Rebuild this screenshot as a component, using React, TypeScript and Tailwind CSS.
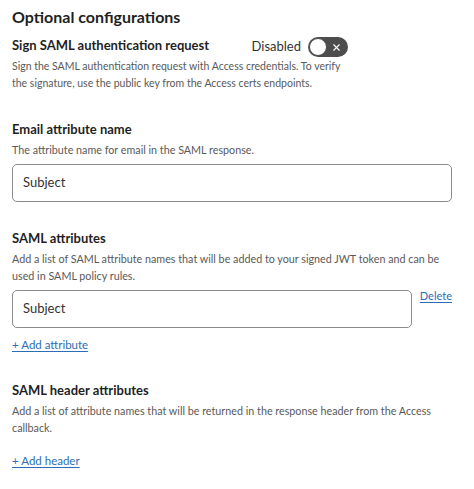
import { X } from "lucide-react";

const font = { fontFamily: 'Lato, "Open Sans", sans-serif' };

function Toggle() {
  return (
    <div className="flex items-center gap-[7px]">
      <span className="text-[13px] text-[#333]">Disabled</span>
      <div className="relative flex h-[20px] w-[40px] items-center rounded-full bg-[#4d4d4d]">
        <div className="absolute left-[1px] top-[1px] h-[18px] w-[18px] rounded-full border border-[#4d4d4d] bg-white" />
        <X className="absolute right-[6px] size-[11px] text-white" strokeWidth={2.5} />
      </div>
    </div>
  );
}

function Link({ children, className = "" }: { children: React.ReactNode; className?: string }) {
  return (
    <div className={`leading-[16px] ${className}`}>
      <a className="cursor-pointer text-[#2c6db5] underline underline-offset-2">{children}</a>
    </div>
  );
}

function Input({ value, className = "" }: { value: string; className?: string }) {
  return (
    <div className={`flex h-[38px] items-center rounded-[5px] border border-[#8a8a8a] bg-white px-[10px] text-[13px] text-[#333] ${className}`}>
      {value}
    </div>
  );
}

const desc = "text-[10.75px] leading-[17px] text-[#595959]";
const heading = "text-[13px] font-bold leading-[18px]";

export default function App() {
  return (
    <div className="min-h-screen bg-white pl-[12px] pr-[22px] pt-[5px] text-[#1f1f1f]" style={font}>
      <h1 className="text-[16px] font-bold leading-[24px]">Optional configurations</h1>

      {/* Sign SAML */}
      <section className="mt-[7px] w-[336px]">
        <div className="flex items-start justify-between">
          <h2 className={heading}>Sign SAML authentication request</h2>
          <div className="mt-[1px]">
            <Toggle />
          </div>
        </div>
        <p className="mt-[1px] text-[10.5px] leading-[17px] text-[#595959]">
          Sign the SAML authentication request with Access credentials. To verify the signature, use the public key from the Access certs endpoints.
        </p>
      </section>

      {/* Email attribute */}
      <section className="mt-[28px]">
        <h2 className={heading}>Email attribute name</h2>
        <p className={`mt-[3px] ${desc}`}>The attribute name for email in the SAML response.</p>
        <Input value="Subject" className="mt-[6px]" />
      </section>

      {/* SAML attributes */}
      <section className="mt-[27px]">
        <h2 className={heading}>SAML attributes</h2>
        <p className={`mt-[3px] ${desc}`}>
          Add a list of SAML attribute names that will be added to your signed JWT token and can be used in SAML policy rules.
        </p>
        <div className="mt-[6px] flex items-start gap-[8px]">
          <Input value="Subject" className="flex-1" />
          <Link className="-mt-[2px] text-[11px]">Delete</Link>
        </div>
        <Link className="mt-[9px] text-[11.5px]">+ Add attribute</Link>
      </section>

      {/* SAML header attributes */}
      <section className="mt-[28px]">
        <h2 className={heading}>SAML header attributes</h2>
        <p className={`mt-[3px] ${desc}`}>
          Add a list of attribute names that will be returned in the response header from the Access callback.
        </p>
        <Link className="mt-[17px] text-[11.5px]">+ Add header</Link>
      </section>
    </div>
  );
}
